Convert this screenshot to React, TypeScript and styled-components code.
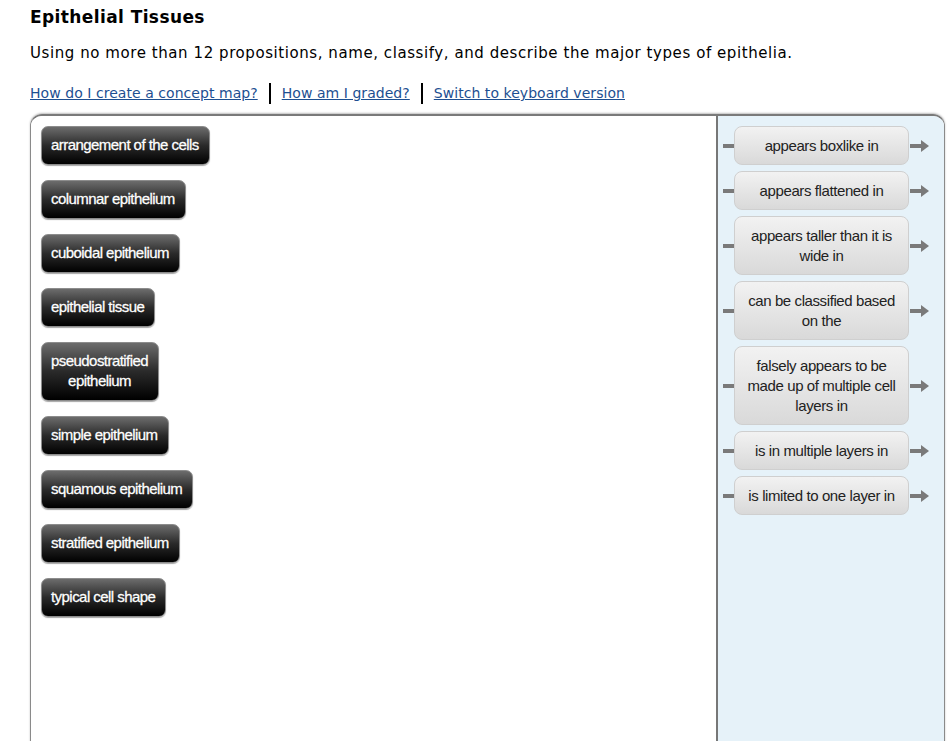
import React from "react";
import styled, { createGlobalStyle } from "styled-components";

const Global = createGlobalStyle`
  html, body { margin: 0; padding: 0; background: #fff; }
  body { font-family: "DejaVu Sans", Verdana, sans-serif; color: #000; overflow: hidden; }
`;

const Page = styled.div`
  padding: 6px 0 0 30px;
  width: 915px;
`;

const Title = styled.h1`
  margin: 0;
  font-size: 17px;
  line-height: 22px;
  font-weight: bold;
  letter-spacing: 0.4px;
`;

const Prompt = styled.p`
  margin: 14px 0 0;
  font-size: 15px;
  line-height: 22px;
  letter-spacing: 0.57px;
`;

const LinkBar = styled.div`
  display: flex;
  align-items: center;
  margin-top: 18px;
  height: 22px;
`;

const HelpLink = styled.a`
  font-size: 14px;
  line-height: 20px;
  color: #1d4f91;
  text-decoration: underline;
  letter-spacing: 0.05px;
  cursor: pointer;
`;

const Sep = styled.span`
  display: inline-block;
  width: 2px;
  height: 21px;
  background: #000;
  margin: 0 11px;
`;

const Frame = styled.div`
  margin-top: 10px;
  height: 660px;
  display: grid;
  grid-template-columns: 1fr 228px;
  border: 1px solid #8a8a8a;
  border-top: 2px solid #7a7a7a;
  border-radius: 12px 12px 0 0;
  box-shadow: 0 -1px 2px rgba(0, 0, 0, 0.25);
  overflow: hidden;
`;

const ConceptPanel = styled.div`
  background: #fff;
  padding: 10px 10px;
  display: flex;
  flex-direction: column;
  align-items: flex-start;
  gap: 15px;
`;

const LinkPanel = styled.div`
  background: #e6f2f9;
  border-left: 2px solid #777;
  padding: 10px 0 0 5px;
  display: flex;
  flex-direction: column;
  gap: 6px;
`;

const Concept = styled.div`
  box-sizing: border-box;
  min-height: 39px;
  padding: 8px 10px 9px 9px;
  border-radius: 7px;
  border: 1px solid #8c8c8c;
  background: linear-gradient(#6c6c6c 0%, #2a2a2a 50%, #000 100%);
  box-shadow: 0 1px 1px rgba(0, 0, 0, 0.35);
  color: #fff;
  font-family: "Liberation Sans", Arial, sans-serif;
  font-size: 15px;
  line-height: 20px;
  letter-spacing: -0.55px;
  text-align: center;
  -webkit-text-stroke: 0.3px #fff;
  text-shadow: 0 0 1px rgba(0, 0, 0, 0.6);
`;

const LinkRow = styled.div`
  display: flex;
  align-items: center;
`;

const Stub = styled.span`
  width: 11px;
  height: 4px;
  background: #7a7a7a;
  flex: none;
`;

const LinkChip = styled.div`
  box-sizing: border-box;
  width: 175px;
  min-height: 39px;
  padding: 9px 8px 8px;
  border-radius: 8px;
  border: 1px solid #cfcfcf;
  background: linear-gradient(#f2f2f2, #d9d9d9);
  color: #222;
  font-family: "Liberation Sans", Arial, sans-serif;
  font-size: 15px;
  line-height: 20px;
  letter-spacing: -0.4px;
  text-align: center;
`;

const Arrow = () => (
  <svg width="21" height="12" viewBox="0 0 21 12" style={{ flex: "none" }}>
    <rect x="1" y="4" width="12" height="4" fill="#7a7a7a" />
    <polygon points="12,0 20,6 12,12" fill="#7a7a7a" />
  </svg>
);

const concepts = [
  "arrangement of the cells",
  "columnar epithelium",
  "cuboidal epithelium",
  "epithelial tissue",
  ["pseudostratified", "epithelium"],
  "simple epithelium",
  "squamous epithelium",
  "stratified epithelium",
  "typical cell shape",
];

const links: string[][] = [
  ["appears boxlike in"],
  ["appears flattened in"],
  ["appears taller than it is", "wide in"],
  ["can be classified based", "on the"],
  ["falsely appears to be", "made up of multiple cell", "layers in"],
  ["is in multiple layers in"],
  ["is limited to one layer in"],
];

export default function App() {
  return (
    <>
      <Global />
      <Page>
        <Title>Epithelial Tissues</Title>
        <Prompt>
          Using no more than 12 propositions, name, classify, and describe the major types of epithelia.
        </Prompt>
        <LinkBar>
          <HelpLink>How do I create a concept map?</HelpLink>
          <Sep />
          <HelpLink>How am I graded?</HelpLink>
          <Sep />
          <HelpLink>Switch to keyboard version</HelpLink>
        </LinkBar>
        <Frame>
          <ConceptPanel>
            {concepts.map((c, i) => (
              <Concept key={i}>
                {Array.isArray(c)
                  ? c.map((l, j) => (
                      <React.Fragment key={j}>
                        {j > 0 && <br />}
                        {l}
                      </React.Fragment>
                    ))
                  : c}
              </Concept>
            ))}
          </ConceptPanel>
          <LinkPanel>
            {links.map((l, i) => (
              <LinkRow key={i}>
                <Stub />
                <LinkChip>
                  {l.map((t, j) => (
                    <React.Fragment key={j}>
                      {j > 0 && <br />}
                      {t}
                    </React.Fragment>
                  ))}
                </LinkChip>
                <Arrow />
              </LinkRow>
            ))}
          </LinkPanel>
        </Frame>
      </Page>
    </>
  );
}
